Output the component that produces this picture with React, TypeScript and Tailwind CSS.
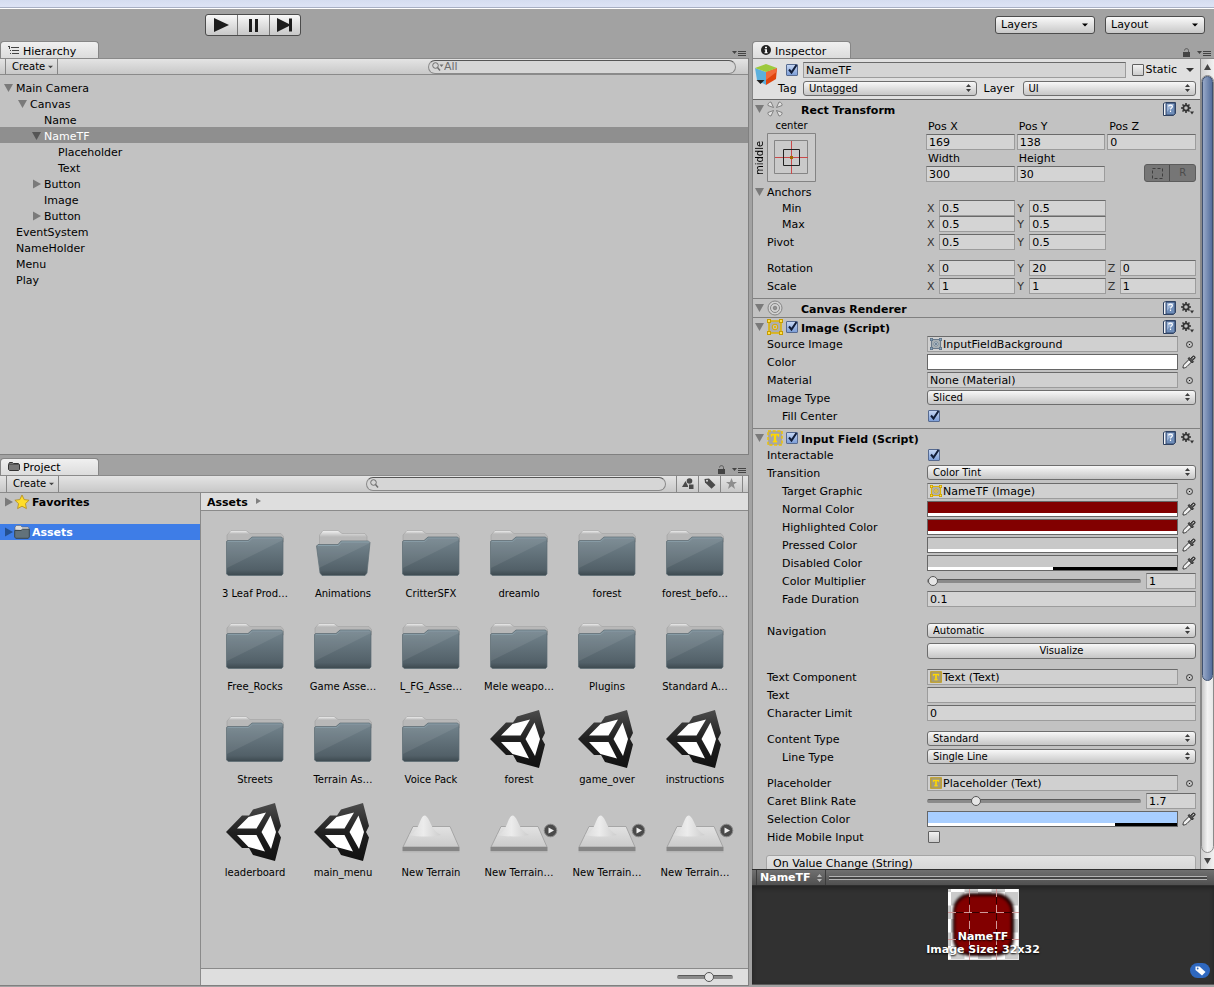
import React, { useState } from "react";
import clsx from "clsx";

/* ---------- icons ---------- */

const Foldout = ({ open = false, className = "text-[#7a7a7a]" }: { open?: boolean; className?: string }) => (
  <svg width="10" height="10" viewBox="0 0 10 10" className={clsx("shrink-0", className)} fill="currentColor">
    {open ? <path d="M0 1h9L4.5 9z" /> : <path d="M1 .5v9L9 5z" />}
  </svg>
);

const UpDown = () => (
  <svg width="5" height="8" viewBox="0 0 5 8" className="pointer-events-none absolute right-[6px] top-[3px]" fill="#3c3c3c">
    <path d="M2.5 0 5 3H0zM0 5h5L2.5 8z" />
  </svg>
);

const Caret = ({ className = "text-black" }: { className?: string }) => (
  <svg width="8" height="4" viewBox="0 0 8 4" className={className} fill="currentColor">
    <path d="M0 0h8L4 4z" />
  </svg>
);

const PanelMenuIcon = () => (
  <svg width="14" height="7" viewBox="0 0 14 7">
    <path d="M0 1h5L2.500 4z" fill="#444" />
    <path d="M6 1.500h8M6 3.500h8M6 5.500h8" stroke="#444" />
  </svg>
);

const LockIcon = () => (
  <svg width="8" height="9" viewBox="0 0 8 9">
    <path d="M0 4h7v5H0z" fill="#444" />
    <path d="M1.500 2.500C1.500 0 5.500 0 5.500 2.500V4" fill="none" stroke="#555" />
  </svg>
);

const HierarchyIcon = () => (
  <svg width="12" height="9" viewBox="0 0 12 9" stroke="#444">
    <path d="M0 .5h2M3 1.5h8M2 4.5h1M4 4.5h7M2 7.5h1M4 7.5h7M1.5 1v2" />
  </svg>
);

const SmallFolderIcon = () => (
  <svg width="12" height="9" viewBox="0 0 12 9">
    <path d="M1.500.5h3l1 1h5v1h1v5l-1 1h-9l-1-1v-5z" fill="#777" stroke="#333" />
    <path d="M1 2.500h10" stroke="#555" />
  </svg>
);

const InfoIcon = () => (
  <svg width="12" height="10" viewBox="0 0 12 10">
    <circle cx="6" cy="5" r="5" fill="#222" />
    <path d="M5 1.800h2v1.500H5zM4.600 4.200H7v3h.7v1H4.500v-1h.7V5.200h-.6z" fill="#fff" />
  </svg>
);

const SearchIcon = ({ caret = false }: { caret?: boolean }) => (
  <svg width="12" height="9" viewBox="0 0 12 9" className="shrink-0">
    <circle cx="3.500" cy="3.500" r="2.800" fill="none" stroke="#6d6d6d" />
    <path d="M5.500 5.500 8 8.500" stroke="#6d6d6d" strokeWidth="1.400" />
    {caret && <path d="M7.500 2.500h4L9.500 5z" fill="#6d6d6d" />}
  </svg>
);

const CubeIcon = () => (
  <svg width="23" height="23" viewBox="0 0 23 23">
    <path d="M0 5 11 9v13L2 17z" fill="#5cb0dd" />
    <path d="M11 9l11-4-1 11-10 6z" fill="#e0430c" />
    <path d="M11 9l11-4-.5 4L11 17z" fill="#f26a3a" />
    <path d="M0 5 11 1l11 4-11 4z" fill="#9dc93c" />
    <path d="M1.500 17h8l-4 4z" fill="#222" />
  </svg>
);

const HelpIcon = () => (
  <svg width="13" height="14" viewBox="0 0 13 14">
    <path d="M.5 1.500 2.500.5h10v11l-2 2H.5z" fill="#f4f6fa" stroke="#2c3e5c" />
    <path d="M3 1h9v10.500l-1.500 1.500H3z" fill="#6f8db8" stroke="#34496c" />
    <path d="M11 2 4 10V2z" fill="#9db4d6" />
    <path d="M5.600 4.600c0-2 3.800-2 3.800 0C9.400 6 7.500 5.800 7.500 7.400M7.500 8.500V10" fill="none" stroke="#fff" strokeWidth="1.200" />
  </svg>
);

const GearIcon = () => (
  <svg width="13" height="12" viewBox="0 0 13 12">
    <circle cx="5" cy="5" r="2.700" fill="none" stroke="#333" strokeWidth="1.800" />
    <path d="M5 0v2M5 8v2M0 5h2M8 5h2M1.500 1.500l1.300 1.300M7.200 7.200l1.300 1.300M8.500 1.500 7.200 2.800M2.800 7.200 1.500 8.500" stroke="#333" strokeWidth="1.600" />
    <path d="M9 8.500h4l-2 3z" fill="#333" />
  </svg>
);

const PickerIcon = () => (
  <svg width="9" height="9" viewBox="0 0 9 9">
    <circle cx="4.500" cy="4.500" r="3" fill="none" stroke="#3a3a3a" />
    <path d="M4 4h1v1H4z" fill="#111" />
  </svg>
);

const DropperIcon = () => (
  <svg width="14" height="14" viewBox="0 0 14 14">
    <path d="M1 13c0-2 .5-3 1.500-4L7 4.500 9.500 7 5 11.500C4 12.500 3 13 1 13z" fill="#efefef" stroke="#333" />
    <path d="M6 3.500 7.200 2.500 8.500 3.600 10.500 1.400C11.800 0 14.200 2 12.700 3.600L10.500 5.600l1 1.200-1.200 1.200z" fill="#555" stroke="#111" strokeWidth=".7" />
    <path d="M10.500 3.500 12 2" stroke="#ccc" />
  </svg>
);

const RectTransformIcon = () => (
  <svg width="16" height="16" viewBox="0 0 16 16" fill="#e2e2e2" stroke="#777" strokeWidth=".9" strokeLinejoin="round">
    <path d="M6.500 6.500 1 4.500C.5 3 2 1 4 1zM9.500 6.500 12 1c2 0 3.500 2 3 3.500zM6.500 9.500 4 15c-2 0-3.500-2-3-3.500zM9.500 9.500l5.500 2c.5 1.500-1 3.500-3 3.500z" />
  </svg>
);

const CanvasRendererIcon = () => (
  <svg width="16" height="16" viewBox="0 0 16 16" fill="none" stroke="#858585">
    <circle cx="8" cy="8" r="7" fill="#d2d2d2" />
    <circle cx="8" cy="8" r="4.500" />
    <circle cx="8" cy="8" r="1.800" fill="#909090" />
  </svg>
);

const ImageIcon = ({ size = 16, dim = false }: { size?: number; dim?: boolean }) => (
  <svg width={size} height={size} viewBox="0 0 16 16">
    <path d="M2 2h12v12H2z" fill={dim ? "#a8b0b4" : "#aeaeae"} stroke={dim ? "#69798a" : "#e0b400"} strokeWidth="1.500" />
    <path d="M0 0h4v4H0zM12 0h4v4h-4zM0 12h4v4H0zM12 12h4v4h-4z" fill={dim ? "#5c7388" : "#c79c00"} />
    <path d="M1 1h2v2H1zM13 1h2v2h-2zM1 13h2v2H1zM13 13h2v2h-2z" fill={dim ? "#8ba3b6" : "#ffe04a"} />
    <circle cx="8" cy="8" r="2.800" fill={dim ? "#dfe6ea" : "#c2c2c2"} stroke={dim ? "#60758a" : "#d5a900"} />
    <circle cx="8" cy="8" r="1.200" fill={dim ? "#3e5870" : "#e8b800"} />
  </svg>
);

const TextIcon = ({ size = 16, dashed = false }: { size?: number; dashed?: boolean }) => (
  <svg width={size} height={size} viewBox="0 0 16 16">
    <path
      d="M1 1h14v14H1z"
      fill={dashed ? "#a6a6a6" : "#a59c7c"}
      stroke={dashed ? "#f0c400" : "#c09a10"}
      strokeWidth="1.500"
      strokeDasharray={dashed ? "3 1.700" : undefined}
    />
    <path d="M4 4h8v2.500h-1V5.200H9V11h1v1.200H6V11h1V5.200H5v1.300H4z" fill="#ffd800" stroke="#ffd800" strokeWidth=".4" />
  </svg>
);

const FolderArt = ({ open = false }: { open?: boolean }) => (
  <svg width="64" height="64" viewBox="0 0 64 64">
    <defs>
      <linearGradient id="folderFront" x1="0" y1="0" x2="0" y2="1">
        <stop offset="0" stopColor="#74858e" />
        <stop offset=".85" stopColor="#526068" />
        <stop offset="1" stopColor="#3d494f" />
      </linearGradient>
      <linearGradient id="folderBack" x1="0" y1="0" x2="0" y2="1">
        <stop offset="0" stopColor="#f2f2f2" />
        <stop offset=".3" stopColor="#b8b8b8" />
      </linearGradient>
    </defs>
    {open ? (
      <>
        <path d="M8.500 13 12 8.500h15l4 3h23l2 3V30H8.500z" fill="url(#folderBack)" stroke="#a0a0a0" strokeWidth=".6" />
        <path d="M5.500 24l1.500-1.500h20l3-3.500h27.500l1.500 1.500-3 30.500-2 2.500H11L9 51z" fill="url(#folderFront)" stroke="#5b6b73" strokeWidth=".7" />
        <path d="M8 46 59 21v-2H30l-3 4H6z" fill="#fff" opacity=".08" />
        <path d="M7 23.500h20.500l3-3.500H58" fill="none" stroke="#8aa0aa" />
      </>
    ) : (
      <>
        <path d="M4 18v-5l4-4.500h15l4 3h31l2.500 3V20H4z" fill="url(#folderBack)" stroke="#a0a0a0" strokeWidth=".6" />
        <path d="M4.500 18.500H25l4-3.500h29.500l1.500 1.500v35.500l-1.500 1.500h-53L3.500 52V19.500z" fill="url(#folderFront)" stroke="#5b6b73" strokeWidth=".7" />
        <path d="M4 46 60 18v-2H29l-4 3H4z" fill="#fff" opacity=".08" />
        <path d="M5 19.500h20.500l4-3.500h29" fill="none" stroke="#8aa0aa" strokeWidth=".8" />
      </>
    )}
  </svg>
);

const UnityArt = () => (
  <svg width="64" height="64" viewBox="0 0 64 64">
    <defs>
      <linearGradient id="unityDark" x1="0" y1="0" x2="0" y2="1">
        <stop offset="0" stopColor="#4c4c4c" />
        <stop offset=".5" stopColor="#202020" />
        <stop offset="1" stopColor="#111" />
      </linearGradient>
    </defs>
    <path d="M3 31 19 14.500h7L30 8.500 52 2l6 23-3 6 3 5.500L52 60l-22-6-4-7h-7z" fill="url(#unityDark)" />
    <path d="M14 27.500 25.500 16 43 11.500 33.500 27.500zM14 34h19.500L42 50.500 25.500 46zM38.500 31 47.500 14.500 53 31 48 48z" fill="#fff" />
  </svg>
);

const TerrainArt = () => (
  <svg width="64" height="64" viewBox="0 0 64 64">
    <defs>
      <linearGradient id="terrainTop" x1="0" y1="0" x2="0" y2="1">
        <stop offset="0" stopColor="#e2e2e2" />
        <stop offset="1" stopColor="#cbcbcb" />
      </linearGradient>
      <linearGradient id="terrainPeak" x1="0" y1="0" x2="1" y2="0">
        <stop offset="0" stopColor="#dadada" />
        <stop offset=".45" stopColor="#ececec" />
        <stop offset="1" stopColor="#cdcdcd" />
      </linearGradient>
    </defs>
    <path d="M14 25.500h37L60 46H4z" fill="url(#terrainTop)" stroke="#9b9b9b" strokeWidth=".8" />
    <path d="M10 34c6-2 8-6 11-13.500 1.500-4 3-6 4.500-6s3.500 2 5 5.500C33.500 27 36 31 42 34c-9 2-22 2-32 0z" fill="url(#terrainPeak)" />
    <path d="M3.500 46h57v4h-57z" fill="#858585" />
    <path d="M3.500 50h57v1.500h-57z" fill="#b5b5b5" />
  </svg>
);

/* ---------- controls ---------- */

interface FieldProps {
  label: string;
  value: string;
  id?: string;
  className?: string;
}

const TextField = ({ label, value, id, className }: FieldProps) => (
  <input
    id={id}
    aria-label={label}
    defaultValue={value}
    className={clsx(
      "h-4 min-w-0 border border-[#9c9c9c] border-t-[#6a6a6a] bg-[#d4d4d4] px-[2px] text-[11px] leading-[14px] outline-none",
      className
    )}
  />
);

const Dropdown = ({ label, value, id, className }: FieldProps) => (
  <span className={clsx("relative flex h-[15px] min-w-0 self-start", className)}>
    <select
      id={id}
      aria-label={label}
      className="w-full appearance-none rounded-[3px] border border-[#6d6d6d] bg-linear-to-b from-[#f8f8f8] to-[#c6c6c6] px-[5px] text-[10px] leading-[13px] outline-none"
    >
      <option>{value}</option>
    </select>
    <UpDown />
  </span>
);

const CheckBox = ({ label, id, on = false }: { label: string; id?: string; on?: boolean }) => (
  <span className="relative flex h-3 w-3 shrink-0">
    <input
      id={id}
      type="checkbox"
      aria-label={label}
      defaultChecked={on}
      className="peer h-full w-full appearance-none rounded-[1px] border border-[#606060] bg-linear-to-b from-[#f2f2f2] to-[#cccccc] checked:border-[#566a90] checked:from-[#c5d6f3] checked:to-[#7e9fd8]"
    />
    <svg width="12" height="12" viewBox="0 0 12 12" className="pointer-events-none absolute inset-0 hidden overflow-visible peer-checked:block">
      <path d="M3 5.500 5.500 8.500 10.500 1" fill="none" stroke="#111d38" strokeWidth="2" />
    </svg>
  </span>
);

const Slider = ({ label, id, min, max, value, className }: { label: string; id?: string; min: number; max: number; value: number; className?: string }) => (
  <input
    id={id}
    type="range"
    aria-label={label}
    min={min}
    max={max}
    step={0.1}
    defaultValue={value}
    className={clsx(
      "h-[10px] min-w-0 appearance-none bg-transparent",
      "[&::-webkit-slider-runnable-track]:h-[4px] [&::-webkit-slider-runnable-track]:rounded-full [&::-webkit-slider-runnable-track]:border [&::-webkit-slider-runnable-track]:border-[#8b8b8b] [&::-webkit-slider-runnable-track]:border-t-[#5a5a5a] [&::-webkit-slider-runnable-track]:bg-[#8a8a8a]",
      "[&::-webkit-slider-thumb]:-mt-[4px] [&::-webkit-slider-thumb]:h-[10px] [&::-webkit-slider-thumb]:w-[10px] [&::-webkit-slider-thumb]:appearance-none [&::-webkit-slider-thumb]:rounded-full [&::-webkit-slider-thumb]:border [&::-webkit-slider-thumb]:border-[#555] [&::-webkit-slider-thumb]:bg-[#e6e6e6]",
      className
    )}
  />
);

const Row = ({ label, htmlFor, indent, className, children }: { label: string; htmlFor?: string; indent?: boolean; className?: string; children?: React.ReactNode }) => (
  <div className={clsx("flex h-4 items-center", className)}>
    <label htmlFor={htmlFor} className={clsx("w-[160px] shrink-0 whitespace-nowrap pt-[2px]", indent && "pl-[15px]")}>
      {label}
    </label>
    {children}
  </div>
);

const DropdownRow = ({ label, value, indent, className }: { label: string; value: string; indent?: boolean; className?: string }) => {
  const id = React.useId();
  return (
    <Row label={label} htmlFor={id} indent={indent} className={className}>
      <Dropdown id={id} label={label} value={value} className="flex-1" />
    </Row>
  );
};

const TextRow = ({ label, value, indent }: { label: string; value: string; indent?: boolean }) => {
  const id = React.useId();
  return (
    <Row label={label} htmlFor={id} indent={indent}>
      <TextField id={id} label={label} value={value} className="flex-1" />
    </Row>
  );
};

const CheckRow = ({ label, on, indent }: { label: string; on?: boolean; indent?: boolean }) => {
  const id = React.useId();
  return (
    <Row label={label} htmlFor={id} indent={indent}>
      <span className="pl-px">
        <CheckBox id={id} label={label} on={on} />
      </span>
    </Row>
  );
};

const ObjectRow = ({ label, value, icon, indent, className }: { label: string; value: string; icon?: React.ReactNode; indent?: boolean; className?: string }) => {
  const id = React.useId();
  return (
    <Row label={label} htmlFor={id} indent={indent} className={className}>
      <button id={id} className="flex h-4 min-w-0 flex-1 items-center border border-[#9c9c9c] border-t-[#6a6a6a] bg-[#d0d0d0] px-[2px] text-left">
        {icon}
        <span className={clsx("truncate pt-px", icon && "pl-px")}>{value}</span>
      </button>
      <button aria-label={`Select ${label}`} className="flex w-[18px] shrink-0 justify-end pr-[2px]">
        <PickerIcon />
      </button>
    </Row>
  );
};

const ColorRow = ({ label, color, alpha = 100, indent }: { label: string; color: string; alpha?: number; indent?: boolean }) => {
  const id = React.useId();
  return (
    <Row label={label} htmlFor={id} indent={indent}>
      <button id={id} className="flex h-4 min-w-0 flex-1 flex-col border border-[#666]" style={{ background: color }}>
        <span className="mt-auto flex h-[3px] w-full bg-black">
          <span className="bg-white" style={{ width: `${alpha}%` }} />
        </span>
      </button>
      <button aria-label={`Pick ${label}`} className="flex w-[18px] shrink-0 justify-end">
        <DropperIcon />
      </button>
    </Row>
  );
};

const SliderRow = ({ label, min, max, value, indent }: { label: string; min: number; max: number; value: number; indent?: boolean }) => {
  const id = React.useId();
  return (
    <Row label={label} htmlFor={id} indent={indent}>
      <Slider id={id} label={label} min={min} max={max} value={value} className="flex-1" />
      <TextField label={`${label} value`} value={String(value)} className="ml-[5px] w-[50px]" />
    </Row>
  );
};

const VectorRow = ({ label, values, indent, className }: { label: string; values: string[]; indent?: boolean; className?: string }) => (
  <Row label={label} indent={indent} className={className}>
    <div className="grid flex-1 grid-cols-3 gap-[2px]">
      {values.map((v, i) => (
        <label key={i} className="flex items-center">
          <span className="w-3 shrink-0 pt-[2px] text-[#333]">{"XYZ"[i]}</span>
          <TextField label={`${label} ${"XYZ"[i]}`} value={v} className="flex-1" />
        </label>
      ))}
    </div>
  </Row>
);

const ComponentHeader = ({ title, icon, toggle }: { title: string; icon: React.ReactNode; toggle?: boolean }) => (
  <div className="flex h-[18px] items-center pl-[2px] pr-[6px]">
    <Foldout open />
    <span className="ml-[2px] flex w-[19px] shrink-0">{icon}</span>
    <span className="flex w-[15px] shrink-0">{toggle && <CheckBox label={`${title} enabled`} on />}</span>
    <h2 className="flex-1 pt-[3px] font-bold">{title}</h2>
    <button aria-label={`${title} help`} className="mr-[5px]">
      <HelpIcon />
    </button>
    <button aria-label={`${title} settings`}>
      <GearIcon />
    </button>
  </div>
);

const TabBar = ({ icon, title, lock }: { icon: React.ReactNode; title: string; lock?: boolean }) => (
  <div className="flex h-[17px] shrink-0 items-end justify-between">
    <button className="flex h-[17px] w-[99px] items-center gap-[3px] rounded-t-[4px] border border-b-0 border-[#868686] bg-linear-to-b from-[#f0f0f0] to-[#dcdcdc] pl-[7px]">
      {icon}
      <span className="pt-[3px]">{title}</span>
    </button>
    <div className="flex items-end gap-[6px] pb-px pr-[3px]">
      {lock && (
        <button aria-label="Lock panel">
          <LockIcon />
        </button>
      )}
      <button aria-label="Panel menu">
        <PanelMenuIcon />
      </button>
    </div>
  </div>
);

const CreateButton = () => (
  <button className="flex h-full items-center gap-[3px] border-x border-[#868686] pl-[6px] pr-1 text-[10px]">
    Create
    <Caret className="w-[5px] text-[#444]" />
  </button>
);

const SearchBox = ({ placeholder, caret, className }: { placeholder?: string; caret?: boolean; className?: string }) => (
  <label className={clsx("flex h-[14px] items-center rounded-full border border-[#8a8a8a] border-t-[#555] bg-[#d6d6d6] pl-[3px]", className)}>
    <SearchIcon caret={caret} />
    <input
      type="text"
      aria-label="Search"
      placeholder={placeholder}
      className="min-w-0 flex-1 bg-transparent text-[11px] leading-[12px] outline-none placeholder:text-[#6d6d6d]"
    />
  </label>
);

/* ---------- data ---------- */

const hierarchy = [
  { name: "Main Camera", depth: 0, fold: "open" },
  { name: "Canvas", depth: 1, fold: "open" },
  { name: "Name", depth: 2 },
  { name: "NameTF", depth: 2, fold: "open" },
  { name: "Placeholder", depth: 3 },
  { name: "Text", depth: 3 },
  { name: "Button", depth: 2, fold: "closed" },
  { name: "Image", depth: 2 },
  { name: "Button", depth: 2, fold: "closed" },
  { name: "EventSystem", depth: 0 },
  { name: "NameHolder", depth: 0 },
  { name: "Menu", depth: 0 },
  { name: "Play", depth: 0 },
];

const assets: { name: string; kind: "folder" | "open" | "scene" | "terrain"; sub?: boolean }[] = [
  { name: "3 Leaf Prod…", kind: "folder" },
  { name: "Animations", kind: "open" },
  { name: "CritterSFX", kind: "folder" },
  { name: "dreamlo", kind: "folder" },
  { name: "forest", kind: "folder" },
  { name: "forest_befo…", kind: "folder" },
  { name: "Free_Rocks", kind: "folder" },
  { name: "Game Asse…", kind: "folder" },
  { name: "L_FG_Asse…", kind: "folder" },
  { name: "Mele weapo…", kind: "folder" },
  { name: "Plugins", kind: "folder" },
  { name: "Standard A…", kind: "folder" },
  { name: "Streets", kind: "folder" },
  { name: "Terrain As…", kind: "folder" },
  { name: "Voice Pack", kind: "folder" },
  { name: "forest", kind: "scene" },
  { name: "game_over", kind: "scene" },
  { name: "instructions", kind: "scene" },
  { name: "leaderboard", kind: "scene" },
  { name: "main_menu", kind: "scene" },
  { name: "New Terrain", kind: "terrain" },
  { name: "New Terrain…", kind: "terrain", sub: true },
  { name: "New Terrain…", kind: "terrain", sub: true },
  { name: "New Terrain…", kind: "terrain", sub: true },
];

/* ---------- panels ---------- */

const Toolbar = () => (
  <header className="flex h-8 shrink-0 items-center justify-between pl-[205px] pr-[9px]">
    <div className="flex h-[22px] overflow-hidden rounded-[3px] border border-[#4c4c4c] bg-linear-to-b from-[#f8f8f8] to-[#c8c8c8]">
      <button aria-label="Play" className="flex w-[31px] items-center justify-center">
        <svg width="15" height="14" viewBox="0 0 15 14"><path d="M0 0v14l15-7z" fill="#1c1c1c" /></svg>
      </button>
      <button aria-label="Pause" className="flex w-[33px] items-center justify-center border-x border-[#777]">
        <svg width="9" height="13" viewBox="0 0 9 13"><path d="M0 0h3v13H0zM6 0h3v13H6z" fill="#1c1c1c" /></svg>
      </button>
      <button aria-label="Step" className="flex w-[30px] items-center justify-center">
        <svg width="16" height="14" viewBox="0 0 16 14"><path d="M0 0v14l12-6v5.500h3V.5h-3V6z" fill="#1c1c1c" /></svg>
      </button>
    </div>
    <div className="flex gap-[10px]">
      {["Layers", "Layout"].map((name) => (
        <span key={name} className="relative flex h-[18px] w-[100px]">
          <select aria-label={name} className="w-full appearance-none rounded-[3px] border border-[#4c4c4c] bg-linear-to-b from-[#fafafa] to-[#c8c8c8] px-[5px] text-[11px] outline-none">
            <option>{name}</option>
          </select>
          <Caret className="pointer-events-none absolute right-[7px] top-[7px] w-[6px] text-black" />
        </span>
      ))}
    </div>
  </header>
);

const HierarchyPanel = () => {
  const [selected, setSelected] = useState(3);
  return (
    <section className="flex min-h-0 flex-[414_1_0%] flex-col">
      <TabBar icon={<HierarchyIcon />} title="Hierarchy" />
      <div className="flex min-h-0 flex-1 flex-col border-b border-r border-[#808080] bg-[#c2c2c2]">
        <div className="flex h-[17px] shrink-0 items-center justify-between border-y border-[#8a8a8a] bg-linear-to-b from-[#e4e4e4] to-[#c8c8c8] pl-[5px] pr-3">
          <CreateButton />
          <SearchBox caret placeholder="All" className="w-[308px]" />
        </div>
        <ul className="pt-1">
          {hierarchy.map((item, i) => (
            <li key={i} className={clsx("h-4", selected === i && "bg-[#8f8f8f] text-white")}>
              <button
                onClick={() => setSelected(i)}
                className={clsx(
                  "flex h-4 w-full items-center gap-[2px] pt-[2px]",
                  ["pl-1", "pl-[18px]", "pl-8", "pl-[46px]"][item.depth]
                )}
              >
                {item.fold ? (
                  <Foldout open={item.fold === "open"} className={selected === i ? "text-[#555]" : "text-[#7a7a7a]"} />
                ) : (
                  <span className="w-[10px]" />
                )}
                <span className="pt-[2px]">{item.name}</span>
              </button>
            </li>
          ))}
        </ul>
      </div>
    </section>
  );
};

const ProjectPanel = () => (
  <section className="flex min-h-0 flex-[529_1_0%] flex-col">
    <TabBar icon={<SmallFolderIcon />} title="Project" lock />
    <div className="flex min-h-0 flex-1 flex-col border-b border-r border-[#808080] bg-[#c2c2c2]">
      <div className="flex h-[18px] shrink-0 items-center border-y border-[#8a8a8a] bg-linear-to-b from-[#e4e4e4] to-[#c8c8c8] pl-[6px] pr-[5px]">
        <CreateButton />
        <SearchBox className="ml-auto mr-[10px] w-[300px]" />
        <button aria-label="Search by type" className="flex h-full w-[22px] items-center justify-center border-l border-[#868686]">
          <svg width="12" height="11" viewBox="0 0 12 11" fill="#4a4a4a"><path d="M0 9 3.500 3 6 8v1z" /><circle cx="7.500" cy="3" r="2.800" /><path d="M7 6.500h4.500V11H7z" /></svg>
        </button>
        <button aria-label="Search by label" className="flex h-full w-[22px] items-center justify-center border-l border-[#868686]">
          <svg width="12" height="11" viewBox="0 0 12 11"><path d="M.5 1 5 .5 11.500 7 7.500 10.800 1 4.500z" fill="#4a4a4a" /><circle cx="3" cy="2.800" r="1" fill="#ddd" /></svg>
        </button>
        <button aria-label="Save search" className="flex h-full w-[23px] items-center justify-center border-x border-[#868686]">
          <svg width="11" height="11" viewBox="0 0 11 11"><path d="M5.500 0 7 4h4L7.800 6.600 9 11 5.500 8.300 2 11l1.200-4.400L0 4h4z" fill="#8d8d8d" /></svg>
        </button>
      </div>
      <div className="flex min-h-0 flex-1">
        <nav className="w-[201px] shrink-0 border-r border-[#8a8a8a] font-bold">
          <button className="mt-px flex h-4 w-full items-center pl-1">
            <Foldout />
            <svg width="16" height="16" viewBox="0 0 16 16" className="mr-[2px]">
              <path d="M8 1l2.200 4.600 4.900.6-3.600 3.400.9 5L8 12.200l-4.400 2.400.9-5L.9 6.200l4.900-.6z" fill="#ffdd2a" stroke="#b08a1a" strokeWidth=".8" />
            </svg>
            <span className="pt-[2px]">Favorites</span>
          </button>
          <button className="mt-[14px] flex h-4 w-full items-center bg-[#3e7de7] pl-1 text-white">
            <Foldout className="text-[#24508f]" />
            <svg width="16" height="14" viewBox="0 0 16 14" className="mr-[2px]">
              <path d="M1 5V2l1.500-1.500h4L8 2h6l1 1v3z" fill="#dcdcdc" stroke="#666" strokeWidth=".6" />
              <path d="M.7 5.500H7L8.500 4.200h6.800V12l-1 1.300H1.700L.7 12z" fill="#62727b" stroke="#3a474d" />
            </svg>
            <span className="pt-[2px]">Assets</span>
          </button>
        </nav>
        <div className="flex min-w-0 flex-1 flex-col">
          <div className="flex h-[18px] shrink-0 items-center gap-2 border-b border-[#8a8a8a] bg-[#dedede] pl-[6px] font-bold">
            <span className="pt-[3px]">Assets</span>
            <svg width="5" height="6" viewBox="0 0 5 6"><path d="M0 0v6l5-3z" fill="#808080" /></svg>
          </div>
          <div className="grid flex-1 grid-cols-[repeat(auto-fill,88px)] content-start overflow-hidden pl-[10px] pt-[11px] text-[10px]">
            {assets.map((a, i) => (
              <div key={i} className="relative flex h-[93px] flex-col items-center">
                {(a.kind === "folder" || a.kind === "open") && <FolderArt open={a.kind === "open"} />}
                {a.kind === "scene" && <UnityArt />}
                {a.kind === "terrain" && <TerrainArt />}
                <span className="whitespace-nowrap leading-4">{a.name}</span>
                {a.sub && (
                  <button aria-label="Expand asset" className="absolute right-[5px] top-[22px]">
                    <svg width="15" height="15" viewBox="0 0 15 15"><circle cx="7.500" cy="7.500" r="6.300" fill="#4a4a4a" stroke="#8a8a8a" /><path d="M5.500 4.500v6L11 7.500z" fill="#eee" /></svg>
                  </button>
                )}
              </div>
            ))}
          </div>
          <div className="flex h-[17px] shrink-0 items-center justify-end border-t border-[#8a8a8a] bg-[#dedede] pr-[15px]">
            <Slider label="Icon size" min={0} max={10} value={6} className="w-[56px]" />
          </div>
        </div>
      </div>
    </div>
  </section>
);

const RectTransform = () => (
  <div className="border-b border-[#808080] pb-1">
    <ComponentHeader title="Rect Transform" icon={<RectTransformIcon />} />
    <div className="flex h-16 pr-1">
      <div className="grid w-[173px] shrink-0 grid-cols-[14px_1fr] grid-rows-[15px_49px]">
        <span className="col-start-2 w-[49px] text-center text-[10px] leading-4">center</span>
        <span className="flex rotate-180 items-center justify-center text-[10px] leading-[12px] [writing-mode:vertical-rl]">middle</span>
        <button aria-label="Anchor presets" className="h-[49px] w-[49px]">
          <svg width="49" height="49" viewBox="0 0 49 49">
            <path d="M.5.5h48v48H.5z" fill="#cacaca" stroke="#838383" />
            <path d="M7.500 7.500h33v33h-33z" fill="none" stroke="#858585" />
            <path d="M24.500 8v33M8 24.500h33" stroke="#c94a4a" />
            <path d="M16.500 16.500h16v16h-16z" fill="none" stroke="#222" />
            <path d="M23 23h3v3h-3z" fill="#a06a00" />
          </svg>
        </button>
      </div>
      <div className="grid flex-1 grid-cols-3 gap-x-[2px]">
        {[
          ["Pos X", "169"],
          ["Pos Y", "138"],
          ["Pos Z", "0"],
          ["Width", "300"],
          ["Height", "30"],
        ].map(([name, value]) => (
          <label key={name} className="flex h-8 flex-col">
            <span className="pl-[2px] pt-[2px]">{name}</span>
            <TextField label={name} value={value} />
          </label>
        ))}
        <div className="flex items-end justify-end">
          <div className="flex h-[18px] w-[52px] rounded-[3px] border border-[#5c5c5c] bg-[#767676] text-[10px] text-[#4c4c4c]">
            <button aria-label="Blueprint mode" className="flex flex-1 items-center justify-center border-r border-[#4c4c4c]">
              <svg width="11" height="11" viewBox="0 0 11 11"><path d="M.5.5h10v10H.5z" fill="none" stroke="#3f3f3f" strokeDasharray="3 2" /></svg>
            </button>
            <button className="flex-1">R</button>
          </div>
        </div>
      </div>
    </div>
    <div className="mt-[2px] flex h-4 items-center gap-[2px] pl-[2px]">
      <Foldout open />
      <span className="pt-[2px]">Anchors</span>
    </div>
    <div className="pl-[14px] pr-1">
      <VectorRow label="Min" values={["0.5", "0.5"]} indent />
      <VectorRow label="Max" values={["0.5", "0.5"]} indent />
      <VectorRow label="Pivot" values={["0.5", "0.5"]} className="mt-[2px]" />
      <VectorRow label="Rotation" values={["0", "20", "0"]} className="mt-[10px]" />
      <VectorRow label="Scale" values={["1", "1", "1"]} className="mt-[2px]" />
    </div>
  </div>
);

const Inspector = () => (
  <aside className="flex w-[462px] shrink-0 flex-col pb-[2px]">
    <TabBar icon={<InfoIcon />} title="Inspector" lock />
    <div className="flex min-h-0 flex-1 border-l border-t border-[#868686] bg-[#c2c2c2]">
      <div className="min-w-0 flex-1 overflow-hidden">
        <div className="flex h-[41px] border-b border-[#666] bg-[#e0e0e0] pl-[2px] pr-1 pt-[3px]">
          <button aria-label="Object icon" className="flex w-[23px] shrink-0 pt-px">
            <CubeIcon />
          </button>
          <div className="flex min-w-0 flex-1 flex-col gap-[3px]">
            <div className="flex h-4 items-center">
              <span className="ml-2 mr-[5px] flex">
                <CheckBox label="Active" on />
              </span>
              <TextField label="Object name" value="NameTF" className="flex-1" />
              <label className="ml-[6px] flex items-center gap-[2px]">
                <CheckBox label="Static" />
                Static
              </label>
              <button aria-label="Static options" className="ml-[9px] mr-[2px]">
                <Caret className="text-[#333]" />
              </button>
            </div>
            <div className="flex h-4 items-center">
              <label htmlFor="tag" className="w-[25px] shrink-0">Tag</label>
              <Dropdown id="tag" label="Tag" value="Untagged" className="flex-1" />
              <label htmlFor="layer" className="ml-[7px] w-[39px] shrink-0">Layer</label>
              <Dropdown id="layer" label="Layer" value="UI" className="flex-1" />
            </div>
          </div>
        </div>
        <RectTransform />
        <div className="border-b border-[#808080]">
          <ComponentHeader title="Canvas Renderer" icon={<CanvasRendererIcon />} />
        </div>
        <div className="border-b border-[#808080] pb-1">
          <ComponentHeader title="Image (Script)" icon={<ImageIcon />} toggle />
          <div className="flex flex-col gap-[2px] pl-[14px] pr-1">
            <ObjectRow label="Source Image" value="InputFieldBackground" icon={<ImageIcon size={12} dim />} />
            <ColorRow label="Color" color="#ffffff" />
            <ObjectRow label="Material" value="None (Material)" />
            <DropdownRow label="Image Type" value="Sliced" />
            <CheckRow label="Fill Center" on indent />
          </div>
        </div>
        <ComponentHeader title="Input Field (Script)" icon={<TextIcon dashed />} toggle />
        <div className="flex flex-col gap-[2px] pl-[14px] pr-1">
          <CheckRow label="Interactable" on />
          <DropdownRow label="Transition" value="Color Tint" />
          <ObjectRow label="Target Graphic" value="NameTF (Image)" icon={<ImageIcon size={12} />} indent />
          <ColorRow label="Normal Color" color="#820000" indent />
          <ColorRow label="Highlighted Color" color="#820000" indent />
          <ColorRow label="Pressed Color" color="#c8c8c8" indent />
          <ColorRow label="Disabled Color" color="#c8c8c8" alpha={50} indent />
          <SliderRow label="Color Multiplier" min={1} max={5} value={1} indent />
          <TextRow label="Fade Duration" value="0.1" indent />
          <DropdownRow label="Navigation" value="Automatic" className="mt-[14px]" />
          <button className="mb-2 ml-[160px] mt-[2px] h-4 rounded-[3px] border border-[#6d6d6d] bg-linear-to-b from-[#f8f8f8] to-[#c6c6c6] text-[10px] leading-[14px]">
            Visualize
          </button>
          <ObjectRow label="Text Component" value="Text (Text)" icon={<TextIcon size={12} />} />
          <TextRow label="Text" value="" />
          <TextRow label="Character Limit" value="0" />
          <DropdownRow label="Content Type" value="Standard" className="mt-2" />
          <DropdownRow label="Line Type" value="Single Line" indent />
          <ObjectRow label="Placeholder" value="Placeholder (Text)" icon={<TextIcon size={12} />} className="mt-2" />
          <SliderRow label="Caret Blink Rate" min={0} max={8} value={1.7} />
          <ColorRow label="Selection Color" color="#a8ceff" alpha={75} />
          <CheckRow label="Hide Mobile Input" />
        </div>
        <div className="ml-[13px] mr-1 mt-[10px] h-5 rounded-t-[3px] border border-[#a5a5a5] bg-linear-to-b from-[#e2e2e2] to-[#d2d2d2] pl-[6px] leading-4">
          On Value Change (String)
        </div>
      </div>
      <div className="flex w-[14px] shrink-0 flex-col items-center border-l border-[#8a8a8a] bg-linear-to-r from-[#d0d0d0] to-[#f2f2f2]">
        <button aria-label="Scroll up" className="flex h-4 w-full shrink-0 items-center justify-center">
          <svg width="7" height="6" viewBox="0 0 7 6"><path d="M3.500 0 7 6H0z" fill="#444" /></svg>
        </button>
        <div className="flex w-full flex-1 flex-col rounded-full border border-[#8a8a8a] bg-linear-to-r from-[#c8c8c8] via-[#f4f4f4] to-[#e6e6e6]">
          <div className="h-[78%] rounded-full border border-[#3f5170] bg-linear-to-r from-[#98a9c8] to-[#546e9c]" />
        </div>
        <button aria-label="Scroll down" className="flex h-4 w-full shrink-0 items-center justify-center">
          <svg width="7" height="6" viewBox="0 0 7 6"><path d="M0 0h7L3.500 6z" fill="#444" /></svg>
        </button>
      </div>
    </div>
    <div className="flex h-[17px] shrink-0 items-center border-y border-[#2e2e2e] bg-linear-to-b from-[#707070] to-[#505050] pr-[7px] font-bold text-white">
      <button className="ml-1 flex h-full items-center gap-[6px] border-x border-[#3c3c3c] px-[3px]">
        NameTF
        <svg width="5" height="8" viewBox="0 0 5 8" fill="#bbb"><path d="M2.500 0 5 3H0zM0 5h5L2.500 8z" /></svg>
      </button>
      <div className="ml-[3px] h-1 flex-1 border-y border-[#b5b5b5] bg-[#444]" />
    </div>
    <div className="relative flex h-[99px] shrink-0 justify-center border-b border-[#5a5a5a] bg-[#313131] pt-[3px] shadow-[inset_0_2px_4px_#222]">
      <svg width="71" height="71" viewBox="0 0 71 71">
        <defs>
          <pattern id="checker" width="27" height="27" patternUnits="userSpaceOnUse" x="3" y="3">
            <path d="M0 0h27v27H0z" fill="#fff" />
            <path d="M0 0h13.500v13.500H0zM13.500 13.500H27V27H13.500z" fill="#cbcbcb" />
          </pattern>
          <filter id="soften" x="-10%" y="-10%" width="120%" height="120%">
            <feGaussianBlur stdDeviation="1.500" />
          </filter>
        </defs>
        <path d="M0 0h71v71H0z" fill="url(#checker)" />
        <rect x="5" y="4" width="61" height="63" rx="18" fill="#120000" filter="url(#soften)" />
        <rect x="7" y="7" width="56" height="57" rx="16" fill="#820000" filter="url(#soften)" />
        <path d="M0 23.500h71M0 50.500h71M21.500 0v71M48.500 0v71" stroke="#300000" strokeDasharray="7 9" strokeDashoffset="8" />
        <path d="M0 23.500h71M0 50.500h71M21.500 0v71M48.500 0v71" stroke="#d09a9a" strokeDasharray="8 8" />
      </svg>
      <p className="absolute inset-x-0 top-[44px] text-center font-bold leading-[13px] text-white [text-shadow:0_1px_2px_#000]">
        NameTF
        <br />
        Image Size: 32x32
      </p>
      <button aria-label="Asset labels" className="absolute bottom-[6px] right-1 flex h-[15px] w-5 items-center justify-center rounded-full bg-[#2f68bf]">
        <svg width="11" height="10" viewBox="0 0 11 10"><path d="M.5.5h4L10.500 6 7 9.500.5 4z" fill="#fff" /><circle cx="2.700" cy="2.500" r=".9" fill="#2f68bf" /></svg>
      </button>
    </div>
  </aside>
);

export default function App() {
  return (
    <div className="flex h-screen flex-col overflow-hidden bg-[#a2a2a2] font-['DejaVu_Sans',Verdana,sans-serif] text-[11px] leading-[14px] text-black">
      <div className="h-[9px] shrink-0 border-b border-white bg-linear-to-b from-[#d5ddf0] to-[#dfe5f6]">
        <div className="h-2 border-b border-[#a8b0c4]" />
      </div>
      <Toolbar />
      <main className="flex min-h-0 flex-1 gap-[3px]">
        <div className="flex min-w-0 flex-1 flex-col gap-[3px] pb-px">
          <HierarchyPanel />
          <ProjectPanel />
        </div>
        <Inspector />
      </main>
    </div>
  );
}
